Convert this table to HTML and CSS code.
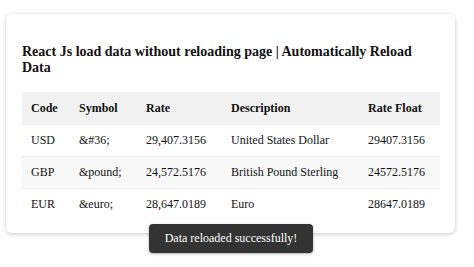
FILE: index.html
```html
<!DOCTYPE html>
<html>
<head>
<meta charset="utf-8">
<link rel="stylesheet" href="styles.css">
</head>
<body>
<div class="card">
  <h2 class="title">React Js load data without reloading page | Automatically Reload Data</h2>
  <table class="rates">
    <colgroup>
      <col class="c1"><col class="c2"><col class="c3"><col class="c4"><col class="c5">
    </colgroup>
    <thead>
      <tr><th>Code</th><th>Symbol</th><th>Rate</th><th>Description</th><th>Rate Float</th></tr>
    </thead>
    <tbody>
      <tr><td>USD</td><td>&amp;#36;</td><td>29,407.3156</td><td>United States Dollar</td><td>29407.3156</td></tr>
      <tr><td>GBP</td><td>&amp;pound;</td><td>24,572.5176</td><td>British Pound Sterling</td><td>24572.5176</td></tr>
      <tr><td>EUR</td><td>&amp;euro;</td><td>28,647.0189</td><td>Euro</td><td>28647.0189</td></tr>
    </tbody>
  </table>
</div>
<div class="toast">Data reloaded successfully!</div>
</body>
</html>
```
FILE: styles.css
```css
html, body { margin: 0; padding: 0; background: #fff; }
body {
  font-family: "Liberation Serif", "Times New Roman", serif;
  color: #111;
  padding: 14px 19px 0 6px;
  position: relative;
  height: 267px;
  box-sizing: border-box;
}
.card {
  background: #fff;
  border-radius: 6px;
  box-shadow: 0 1px 4px rgba(0,0,0,0.22);
  padding: 30px 15px 13px 16px;
  height: 219px;
  box-sizing: border-box;
}
.title {
  font-size: 14px;
  line-height: 16px;
  font-weight: bold;
  margin: 0 0 16px 0;
  color: #111;
}
.rates {
  width: 418px;
  border-collapse: collapse;
  font-size: 12px;
  table-layout: fixed;
}
.c1 { width: 48px; }
.c2 { width: 67px; }
.c3 { width: 85px; }
.c4 { width: 137px; }
.c5 { width: 81px; }
.rates th, .rates td {
  text-align: left;
  padding: 0 0 0 9px;
  height: 32px;
  white-space: nowrap;
  font-weight: normal;
}
.rates th { font-weight: bold; }
.rates thead tr { background: #f2f2f2; }
.rates tbody td { box-shadow: inset 0 1px 0 #ececec; }
.rates tbody tr:nth-child(2) { background: #f8f8f8; }
.toast {
  position: absolute;
  left: 149px;
  top: 224px;
  width: 164px;
  height: 29px;
  background: #333;
  color: #fff;
  border-radius: 4px;
  font-size: 12px;
  display: flex;
  align-items: center;
  justify-content: center;
  box-shadow: 0 1px 3px rgba(0,0,0,0.3);
}
```
